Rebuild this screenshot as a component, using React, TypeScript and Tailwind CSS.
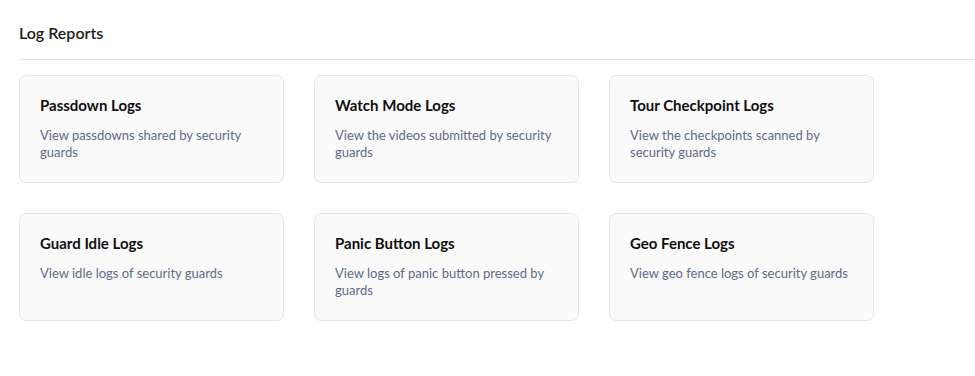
import React from 'react';

type LogCard = {
  title: string;
  description: string;
};

const cards: LogCard[] = [
  { title: 'Passdown Logs', description: 'View passdowns shared by security guards' },
  { title: 'Watch Mode Logs', description: 'View the videos submitted by security guards' },
  { title: 'Tour Checkpoint Logs', description: 'View the checkpoints scanned by security guards' },
  { title: 'Guard Idle Logs', description: 'View idle logs of security guards' },
  { title: 'Panic Button Logs', description: 'View logs of panic button pressed by guards' },
  { title: 'Geo Fence Logs', description: 'View geo fence logs of security guards' },
];

const Card: React.FC<{ card: LogCard }> = ({ card }) => (
  <div className="h-[108px] rounded-[7px] border border-[#e2e6ee] bg-[#fafafb] pl-[20px] pr-[18px] pt-[19px] cursor-pointer">
    <h3 className="text-[15px] leading-[20px] font-bold text-[#0f0f0f]">{card.title}</h3>
    <p className="mt-[12px] text-[13px] leading-[17px] text-[#5c6b87]">{card.description}</p>
  </div>
);

export default function App() {
  return (
    <div
      className="min-h-screen bg-white pl-[19px]"
      style={{ fontFamily: 'Lato, "Noto Sans", sans-serif' }}
    >
      {/* Header */}
      <div className="border-b border-[#e3e5ea] pt-[23px] pb-[16px]">
        <h1 className="text-[16px] leading-[20px] font-semibold text-[#1c1c1c]">Log Reports</h1>
      </div>

      {/* Cards */}
      <div className="mt-[15px] grid grid-cols-[repeat(3,265px)] gap-[30px]">
        {cards.map((card) => (
          <Card key={card.title} card={card} />
        ))}
      </div>
    </div>
  );
}
